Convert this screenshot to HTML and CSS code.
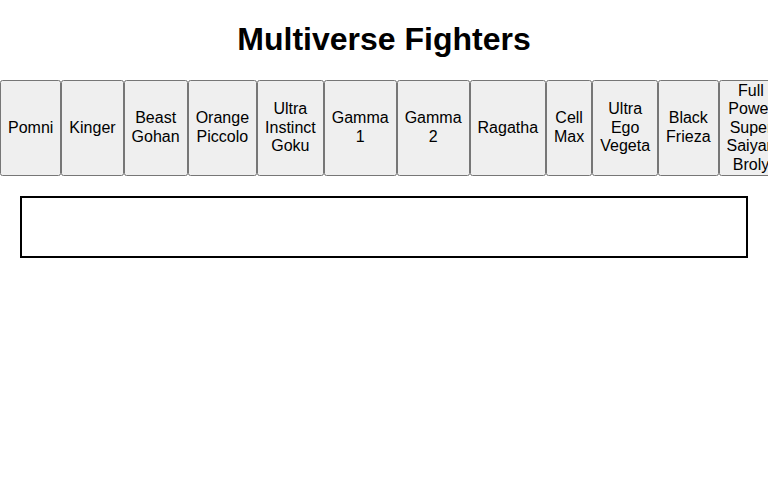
FILE: index.html
```html
<!DOCTYPE html>
<html lang="en">
<head>
<meta charset="utf-8">
<title>Multiverse Fighters</title>
<link rel="stylesheet" href="styles.css">
</head>
<body>
<h1 class="title">Multiverse Fighters</h1>
<div class="fighters">
  <button class="fighter">Pomni</button>
  <button class="fighter">Kinger</button>
  <button class="fighter">Beast Gohan</button>
  <button class="fighter">Orange Piccolo</button>
  <button class="fighter">Ultra Instinct Goku</button>
  <button class="fighter">Gamma 1</button>
  <button class="fighter">Gamma 2</button>
  <button class="fighter">Ragatha</button>
  <button class="fighter">Cell Max</button>
  <button class="fighter">Ultra Ego Vegeta</button>
  <button class="fighter">Black Frieza</button>
  <button class="fighter">Full Power Super Saiyan Broly</button>
</div>
<div class="arena"><p class="arena-text"></p></div>
</body>
</html>
```
FILE: styles.css
```css
html, body {
  margin: 0;
  padding: 0;
  overflow: hidden;
  background: #ffffff;
  font-family: "Liberation Sans", Arial, sans-serif;
}

.title {
  font-size: 32px;
  font-weight: bold;
  text-align: center;
  margin: 21.44px 0;
  line-height: 37px;
  color: #000;
}

.fighters {
  display: flex;
  width: 768px;
}

.fighter {
  font-family: "Liberation Sans", Arial, sans-serif;
  font-size: 16px;
  line-height: 18.4px;
  padding: 0 6px;
  color: #000;
  min-width: min-content;
}

.arena {
  margin: 20px;
  padding: 20px;
  border: 2px solid #000;
}

.arena-text {
  margin: 0;
  min-height: 18px;
}
```
